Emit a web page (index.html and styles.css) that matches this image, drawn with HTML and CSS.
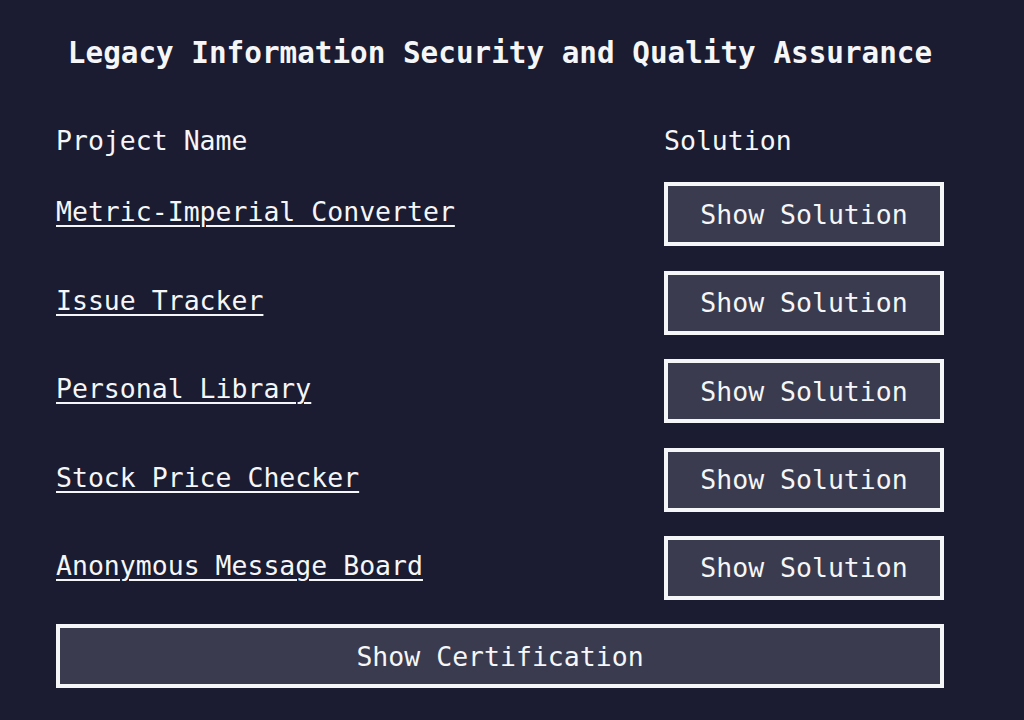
FILE: index.html
```html
<!DOCTYPE html>
<html lang="en">
<head>
  <meta charset="UTF-8">
  <meta name="viewport" content="width=device-width, initial-scale=1.0">
  <title>Legacy Information Security and Quality Assurance</title>
  <link rel="stylesheet" href="styles.css">
</head>
<body>
  <main class="cert-settings">
    <h1>Legacy Information Security and Quality Assurance</h1>
    <div class="project-grid">
      <div class="col-head">Project Name</div>
      <div class="col-head">Solution</div>

      <a class="project-link" href="#">Metric-Imperial Converter</a>
      <button class="btn">Show Solution</button>

      <a class="project-link" href="#">Issue Tracker</a>
      <button class="btn">Show Solution</button>

      <a class="project-link" href="#">Personal Library</a>
      <button class="btn">Show Solution</button>

      <a class="project-link" href="#">Stock Price Checker</a>
      <button class="btn">Show Solution</button>

      <a class="project-link" href="#">Anonymous Message Board</a>
      <button class="btn">Show Solution</button>

      <button class="btn btn-wide">Show Certification</button>
    </div>
  </main>
</body>
</html>
```

FILE: styles.css
```css
body {
  margin: 0;
  background-color: #1b1b32;
  color: #f5f6f7;
  font-family: "DejaVu Sans Mono", "Liberation Mono", monospace;
}
.cert-settings {
  width: 888px;
  padding: 36px 56px 0;
}
h1 {
  margin: 0 0 47px;
  font-size: 29.3px;
  line-height: 35px;
  font-weight: bold;
  text-align: center;
}
.project-grid {
  display: grid;
  grid-template-columns: 1fr 280px;
  row-gap: 24.4px;
  align-items: center;
  font-size: 26.5px;
}
.col-head {
  padding-top: 6px;
  line-height: 34px;
}
.project-link {
  color: #f5f6f7;
  text-decoration: underline;
  text-underline-offset: 4px;
  text-decoration-thickness: 2px;
  line-height: 40px;
  margin-top: -4px;
}
.btn {
  height: 64px;
  box-sizing: border-box;
  background-color: #3b3b4f;
  border: 4px solid #f5f6f7;
  color: #f5f6f7;
  font-family: inherit;
  font-size: 26.5px;
  padding: 0;
  cursor: pointer;
}
.btn-wide {
  grid-column: 1 / -1;
}
```
